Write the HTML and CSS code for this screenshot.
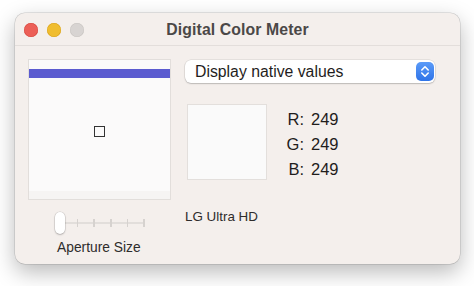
FILE: index.html
```html
<!DOCTYPE html>
<html>
<head>
<meta charset="utf-8">
<link rel="stylesheet" href="styles.css">
</head>
<body>
<div class="window">
  <div class="titlebar">
    <div class="lights">
      <span class="light red"></span>
      <span class="light yellow"></span>
      <span class="light gray"></span>
    </div>
    <div class="title">Digital Color Meter</div>
  </div>
  <div class="content">
    <div class="left">
      <div class="preview">
        <div class="bar"></div>
        <div class="area"><span class="aperture"></span></div>
        <div class="strip"></div>
      </div>
      <div class="slider">
        <div class="track">
          <span class="tick"></span><span class="tick"></span><span class="tick"></span><span class="tick"></span><span class="tick"></span><span class="tick"></span>
        </div>
        <span class="knob"></span>
      </div>
      <div class="caption">Aperture Size</div>
    </div>
    <div class="right">
      <div class="popup">
        <span class="popup-text">Display native values</span>
        <span class="stepper">
          <svg width="18" height="19" viewBox="0 0 18 19">
            <path d="M5.8 8 L9 4.8 L12.2 8" fill="none" stroke="#fff" stroke-width="1.6" stroke-linecap="round" stroke-linejoin="round"/>
            <path d="M5.8 11 L9 14.2 L12.2 11" fill="none" stroke="#fff" stroke-width="1.6" stroke-linecap="round" stroke-linejoin="round"/>
          </svg>
        </span>
      </div>
      <div class="readout">
        <div class="swatch"></div>
        <div class="values">
          <div class="row"><span class="lab">R:</span><span class="num">249</span></div>
          <div class="row"><span class="lab">G:</span><span class="num">249</span></div>
          <div class="row"><span class="lab">B:</span><span class="num">249</span></div>
        </div>
      </div>
      <div class="display">LG Ultra HD</div>
    </div>
  </div>
</div>
</body>
</html>
```
FILE: styles.css
```css
html, body {
  margin: 0;
  padding: 0;
  background: #ffffff;
}
body {
  width: 474px;
  height: 286px;
  overflow: hidden;
  padding: 13px 0 0 15px;
  box-sizing: border-box;
  font-family: "Liberation Sans", Arial, sans-serif;
}
.window {
  width: 445px;
  height: 251px;
  background: #f4efec;
  border-radius: 10px;
  box-shadow: 0 0 0 0.5px rgba(0,0,0,0.18), 0 8px 22px rgba(0,0,0,0.28);
  display: flex;
  flex-direction: column;
}
.titlebar {
  height: 33px;
  border-bottom: 1px solid #e3dedb;
  display: flex;
  align-items: center;
  position: relative;
  box-sizing: border-box;
}
.lights {
  display: flex;
  gap: 9px;
  padding-left: 9px;
  padding-top: 1px;
}
.light {
  width: 14px;
  height: 14px;
  border-radius: 50%;
  display: block;
}
.red { background: #ec5f57; box-shadow: inset 0 0 0 0.5px #d5483f; }
.yellow { background: #f0bd2f; box-shadow: inset 0 0 0 0.5px #d9a21d; }
.gray { background: #d8d4d2; box-shadow: inset 0 0 0 0.5px #c9c5c2; }
.title {
  position: absolute;
  left: 0;
  right: 0;
  top: 8px;
  text-align: center;
  font-weight: bold;
  font-size: 15.8px;
  color: #4b4847;
  letter-spacing: 0.1px;
}
.content {
  display: flex;
  padding: 13px 0 0 13px;
  gap: 14px;
}
.left {
  width: 143px;
  display: flex;
  flex-direction: column;
}
.preview {
  width: 143px;
  height: 141px;
  box-sizing: border-box;
  border: 1px solid #e2dedb;
  background: #fbfafa;
  display: flex;
  flex-direction: column;
}
.bar {
  margin-top: 9px;
  height: 9px;
  background: #5b5bd0;
}
.area {
  flex: 1;
  display: flex;
  align-items: center;
  justify-content: center;
}
.aperture {
  width: 9px;
  height: 9px;
  border: 1.5px solid #333;
  display: block;
  margin-bottom: 6px;
}
.strip {
  height: 8px;
  background: #f6f4f3;
}
.slider {
  position: relative;
  margin: 12px 0 0 27px;
  width: 90px;
  height: 22px;
}
.track {
  position: absolute;
  left: 5px;
  right: 0;
  top: 10px;
  height: 2px;
  background: #e2dedb;
  display: flex;
  justify-content: space-between;
}
.tick {
  width: 1.5px;
  height: 8px;
  margin-top: -3px;
  background: #d6d2cf;
  display: block;
}
.knob {
  position: absolute;
  left: 0;
  top: 0;
  width: 10px;
  height: 22px;
  border-radius: 5px;
  background: #ffffff;
  box-shadow: 0 0 0 0.5px rgba(0,0,0,0.15), 0 1px 2px rgba(0,0,0,0.2);
}
.caption {
  margin: 6px 0 0 29px;
  font-size: 13.8px;
  color: #2e2c2b;
}
.right {
  display: flex;
  flex-direction: column;
}
.popup {
  width: 250px;
  height: 23px;
  margin-top: 1px;
  box-sizing: border-box;
  background: #ffffff;
  border-radius: 6px;
  box-shadow: 0 0 0 0.5px rgba(0,0,0,0.12), 0 1px 1.5px rgba(0,0,0,0.18);
  display: flex;
  align-items: center;
  justify-content: space-between;
  padding: 0 1px 0 10px;
}
.popup-text {
  font-size: 15.8px;
  color: #1f1d1c;
}
.stepper {
  width: 18px;
  height: 19px;
  border-radius: 5px;
  background: linear-gradient(#5b9bf8, #2f74e8);
  display: block;
}
.stepper svg { display: block; }
.readout {
  display: flex;
  margin-top: 21px;
  margin-left: 2px;
}
.swatch {
  width: 80px;
  height: 76px;
  box-sizing: border-box;
  border: 1px solid #e3dfdc;
  background: #fafafa;
}
.values {
  margin-left: 17px;
  margin-top: 6px;
  display: flex;
  flex-direction: column;
  gap: 7px;
}
.row {
  display: flex;
  font-size: 16.5px;
  line-height: 18px;
  color: #1f1d1c;
}
.lab {
  width: 20px;
  text-align: right;
}
.num {
  margin-left: 7px;
}
.display {
  margin-top: 29px;
  font-size: 13.4px;
  color: #2e2c2b;
}
```
